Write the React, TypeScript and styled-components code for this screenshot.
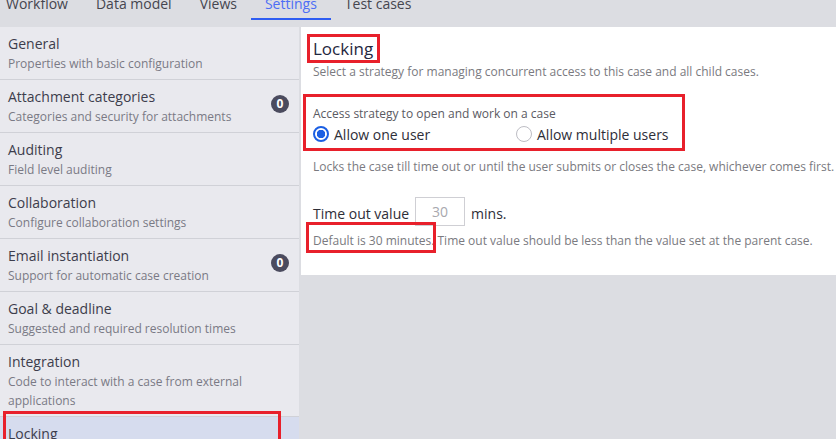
import React from "react";
import styled, { createGlobalStyle } from "styled-components";

const GlobalStyle = createGlobalStyle`
  html, body {
    margin: 0;
    padding: 0;
    overflow: hidden;
  }
  body {
    font-family: "Open Sans", "Noto Sans", sans-serif;
  }
`;

const Root = styled.div`
  position: relative;
  width: 836px;
  height: 439px;
  overflow: hidden;
  background: #dcdde2;
`;

const TabBar = styled.div`
  height: 27px;
  display: flex;
  align-items: flex-start;
  overflow: hidden;
  margin-left: -8px;
`;

const Tab = styled.div<{ $active?: boolean }>`
  margin-top: -6px;
  padding: 0 14px 4px;
  height: 20px;
  line-height: 20px;
  font-size: 14px;
  white-space: nowrap;
  color: ${(p) => (p.$active ? "#4d6ef5" : "#45454f")};
  border-bottom: 2px solid ${(p) => (p.$active ? "#2f5df2" : "transparent")};
`;

const Body = styled.div`
  display: flex;
  align-items: flex-start;
  gap: 2px;
`;

const Sidebar = styled.div`
  width: 299px;
  flex-shrink: 0;
  background: #e9e9ee;
  display: flex;
  flex-direction: column;
`;

const Row = styled.div<{ $selected?: boolean }>`
  display: flex;
  align-items: center;
  padding: 7px 10px 6px 8px;
  border-bottom: 1px solid #d0d1d7;
  background: ${(p) => (p.$selected ? "#d6dcee" : "transparent")};
`;

const RowText = styled.div`
  flex: 1;
  min-width: 0;
`;

const RowTitle = styled.div`
  font-size: 14px;
  line-height: 20px;
  color: #3d3d4c;
`;

const RowSub = styled.div`
  font-size: 12px;
  line-height: 19px;
  color: #7a7a85;
  max-width: 240px;
`;

const Badge = styled.span`
  width: 18px;
  height: 18px;
  border-radius: 50%;
  background: #4b4b5e;
  color: #fff;
  font-size: 12px;
  font-weight: 700;
  display: flex;
  align-items: center;
  justify-content: center;
  margin-top: -6px;
  flex-shrink: 0;
`;

const Content = styled.div`
  flex: 1;
  background: #fff;
  height: 248px;
  box-sizing: border-box;
  padding: 10px 12px 0;
`;

const Heading = styled.h2`
  margin: 0;
  font-size: 17px;
  font-weight: 400;
  line-height: 24px;
  color: #1f2740;
`;

const Hint = styled.div<{ $gap?: number }>`
  font-size: 12px;
  line-height: 18px;
  color: #7a7a80;
  white-space: nowrap;
  margin-top: ${(p) => p.$gap ?? 0}px;
`;

const FieldLabel = styled.div`
  margin-top: 24px;
  font-size: 12px;
  line-height: 18px;
  color: #5a5a62;
`;

const RadioGroup = styled.div`
  display: flex;
  height: 22px;
  align-items: center;
`;

const RadioOption = styled.label`
  width: 203px;
  display: flex;
  align-items: center;
  gap: 5px;
  font-size: 14px;
  color: #2e2e38;
  white-space: nowrap;
`;

const RadioDot = styled.span<{ $checked?: boolean }>`
  width: 16px;
  height: 16px;
  box-sizing: border-box;
  border-radius: 50%;
  flex-shrink: 0;
  border: ${(p) => (p.$checked ? "2px solid #1b5fe3" : "1px solid #bdbdc4")};
  background: ${(p) => (p.$checked ? "radial-gradient(circle, #1b5fe3 0 4px, #fff 4.5px)" : "#fff")};
`;

const TimeoutRow = styled.div`
  margin-top: 21px;
  display: flex;
  align-items: center;
  gap: 6px;
  font-size: 14px;
  color: #2e2e38;
`;

const TimeoutText = styled.span`
  padding-top: 4px;
`;

const ValueBox = styled.div`
  width: 50px;
  height: 29px;
  box-sizing: border-box;
  border: 1px solid #cfcfd4;
  display: flex;
  align-items: center;
  justify-content: center;
  color: #a8a8ae;
  font-size: 14px;
`;

const Marker = styled.div`
  position: absolute;
  border: 3px solid #e8202b;
  box-sizing: border-box;
  pointer-events: none;
`;

const tabs = ["Workflow", "Data model", "Views", "Settings", "Test cases"];

const items = [
  { title: "General", sub: "Properties with basic configuration" },
  { title: "Attachment categories", sub: "Categories and security for attachments", badge: 0 },
  { title: "Auditing", sub: "Field level auditing" },
  { title: "Collaboration", sub: "Configure collaboration settings" },
  { title: "Email instantiation", sub: "Support for automatic case creation", badge: 0 },
  { title: "Goal & deadline", sub: "Suggested and required resolution times" },
  { title: "Integration", sub: "Code to interact with a case from external applications" },
  { title: "Locking", sub: "Concurrent access settings", selected: true },
];

const markers = [
  { left: 307, top: 34, width: 73, height: 29 },
  { left: 303, top: 94, width: 382, height: 57 },
  { left: 306, top: 222, width: 130, height: 31 },
  { left: 3, top: 411, width: 278, height: 60 },
];

export default function App() {
  return (
    <Root>
      <GlobalStyle />
      <TabBar>
        {tabs.map((t) => (
          <Tab key={t} $active={t === "Settings"}>
            {t}
          </Tab>
        ))}
      </TabBar>
      <Body>
        <Sidebar>
          {items.map((it) => (
            <Row key={it.title} $selected={it.selected}>
              <RowText>
                <RowTitle>{it.title}</RowTitle>
                <RowSub>{it.sub}</RowSub>
              </RowText>
              {it.badge !== undefined && <Badge>{it.badge}</Badge>}
            </Row>
          ))}
        </Sidebar>
        <Content>
          <Heading>Locking</Heading>
          <Hint $gap={2}>Select a strategy for managing concurrent access to this case and all child cases.</Hint>
          <FieldLabel>Access strategy to open and work on a case</FieldLabel>
          <RadioGroup>
            <RadioOption>
              <RadioDot $checked />
              Allow one user
            </RadioOption>
            <RadioOption>
              <RadioDot />
              Allow multiple users
            </RadioOption>
          </RadioGroup>
          <Hint $gap={13}>
            Locks the case till time out or until the user submits or closes the case, whichever comes first.
          </Hint>
          <TimeoutRow>
            <TimeoutText>Time out value</TimeoutText>
            <ValueBox>30</ValueBox>
            <TimeoutText>mins.</TimeoutText>
          </TimeoutRow>
          <Hint $gap={6}>Default is 30 minutes. Time out value should be less than the value set at the parent case.</Hint>
        </Content>
      </Body>
      {markers.map((m, i) => (
        <Marker key={i} style={{ left: m.left, top: m.top, width: m.width, height: m.height }} />
      ))}
    </Root>
  );
}
